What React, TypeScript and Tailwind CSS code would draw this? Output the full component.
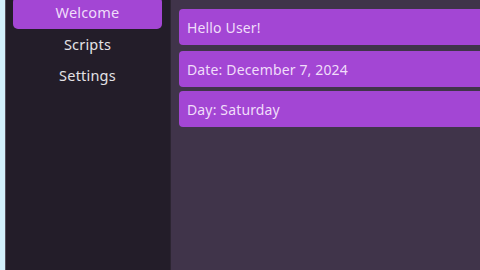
export default function App() {
  const font = { fontFamily: '"Noto Sans", "Open Sans", sans-serif' };
  return (
    <div className="flex h-screen w-full overflow-hidden bg-[#40344a]" style={font}>
      {/* window edge */}
      <div className="w-[5px] shrink-0 bg-[#d2f1fc]" />
      <div className="w-px shrink-0 bg-[#55505c]" />

      {/* sidebar */}
      <aside className="flex w-[165px] shrink-0 flex-col border-r border-[#2c2532] bg-[#231d29] px-[7px] pr-[8px] text-[14.5px] tracking-[0.2px]">
        <div className="-mt-[3px] flex h-[32px] items-center justify-center rounded-[5px] bg-[#a346d4] text-[#f0ddfa]">
          Welcome
        </div>
        <div className="flex h-[31px] items-center justify-center text-[#e4e2e6]">Scripts</div>
        <div className="flex h-[31px] items-center justify-center text-[#e4e2e6]">Settings</div>
      </aside>

      {/* main */}
      <main className="flex min-w-0 flex-1 flex-col overflow-hidden pl-2 pt-[9px] text-[14px] tracking-[0.15px] text-[#f0ddfa]">
        <div className="-mr-2 flex h-[36px] items-center rounded-[4px] bg-[#a346d4] pl-2">Hello User!</div>
        <div className="-mr-2 mt-[6px] flex h-[36px] items-center rounded-[4px] bg-[#a346d4] pl-2">
          Date: December 7, 2024
        </div>
        <div className="-mr-2 mt-[4px] flex h-[36px] items-center rounded-[4px] bg-[#a346d4] pl-2">Day: Saturday</div>
      </main>
    </div>
  );
}
